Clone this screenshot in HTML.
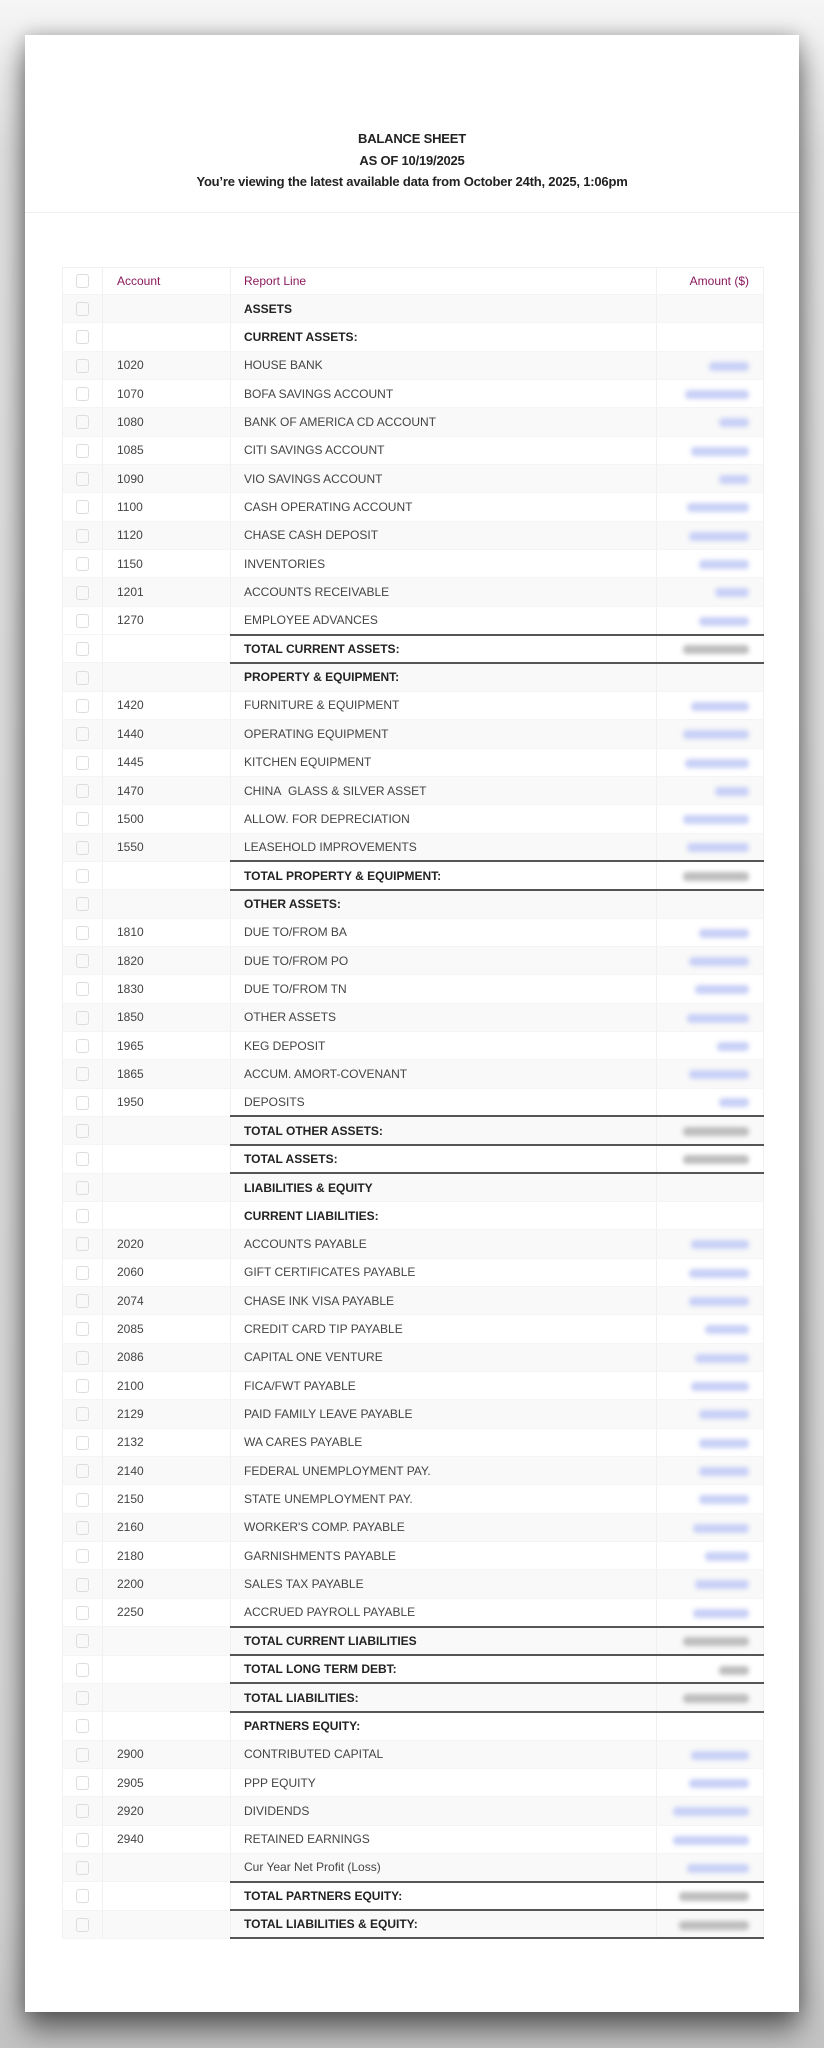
<!DOCTYPE html>
<html><head><meta charset="utf-8">
<style>
html,body{margin:0;padding:0}
body{width:824px;height:2048px;background:#ececec;position:relative;overflow:hidden;font-family:"Liberation Sans",sans-serif;}
.bg{position:absolute;left:0;top:0;width:824px;height:2048px;background:linear-gradient(#f6f6f6 0,#e0e0e0 150px,#d2d2d2 1900px,#c4c4c4 2048px)}
.card{position:absolute;left:25px;top:35px;width:774px;height:1977px;background:#fff;box-shadow:0 18px 28px rgba(0,0,0,.5),0 0 18px rgba(0,0,0,.25)}
.title{position:absolute;left:0;width:774px;text-align:center;font-weight:bold;color:#222;font-size:13px;letter-spacing:-0.2px}
.sep{position:absolute;left:0;top:177px;width:774px;height:1px;background:#f0f0f0}
table{position:absolute;left:37px;top:232px;width:701px;border-collapse:collapse;table-layout:fixed;font-size:12px;color:#444}
td,th{height:28.35px;padding:0;border-right:1px solid #f0f0f0;border-bottom:1px solid #f4f4f4;white-space:nowrap;box-sizing:border-box}
th{font-weight:normal;color:#8a1a5c;text-align:left;height:27px;border-top:1px solid #f0f0f0}
tr>*:first-child{border-left:1px solid #f0f0f0;text-align:center}
tr>*:last-child{text-align:right;padding-right:14px}
td:nth-child(2),th:nth-child(2){padding-left:14px}
td:nth-child(3),th:nth-child(3){padding-left:13px}
.cb{display:inline-block;width:11px;height:12px;border:1px solid #ddd;border-radius:3px;vertical-align:middle}
tr.g td{background:#f9f9f9}
tr.b td:nth-child(3){font-weight:bold;color:#222}
tr.t td:nth-child(3),tr.t td:nth-child(4){border-top:2px solid #555;border-bottom:2px solid #555;font-weight:bold;color:#222}
.a{display:inline-block;height:9px;background:#c8d0f6;filter:blur(2.5px);vertical-align:middle;border-radius:4px}
.tt{background:#bdbdbd}
</style></head><body>
<div class="bg"></div>
<div class="card">
<div class="title" style="top:96px">BALANCE SHEET</div>
<div class="title" style="top:118px">AS OF 10/19/2025</div>
<div class="title" style="top:139px">You’re viewing the latest available data from October 24th, 2025, 1:06pm</div>
<div class="sep"></div>
<table>
<colgroup><col style="width:40px"><col style="width:128px"><col style="width:426px"><col style="width:107px"></colgroup>
<tr><th><span class="cb"></span></th><th>Account</th><th>Report Line</th><th>Amount ($)</th></tr>
<tr class="g b"><td><span class="cb"></span></td><td></td><td>ASSETS</td><td></td></tr>
<tr class="b"><td><span class="cb"></span></td><td></td><td>CURRENT ASSETS:</td><td></td></tr>
<tr class="g"><td><span class="cb"></span></td><td>1020</td><td>HOUSE BANK</td><td><span class="a" style="width:40px"></span></td></tr>
<tr><td><span class="cb"></span></td><td>1070</td><td>BOFA SAVINGS ACCOUNT</td><td><span class="a" style="width:64px"></span></td></tr>
<tr class="g"><td><span class="cb"></span></td><td>1080</td><td>BANK OF AMERICA CD ACCOUNT</td><td><span class="a" style="width:30px"></span></td></tr>
<tr><td><span class="cb"></span></td><td>1085</td><td>CITI SAVINGS ACCOUNT</td><td><span class="a" style="width:58px"></span></td></tr>
<tr class="g"><td><span class="cb"></span></td><td>1090</td><td>VIO SAVINGS ACCOUNT</td><td><span class="a" style="width:30px"></span></td></tr>
<tr><td><span class="cb"></span></td><td>1100</td><td>CASH OPERATING ACCOUNT</td><td><span class="a" style="width:62px"></span></td></tr>
<tr class="g"><td><span class="cb"></span></td><td>1120</td><td>CHASE CASH DEPOSIT</td><td><span class="a" style="width:60px"></span></td></tr>
<tr><td><span class="cb"></span></td><td>1150</td><td>INVENTORIES</td><td><span class="a" style="width:50px"></span></td></tr>
<tr class="g"><td><span class="cb"></span></td><td>1201</td><td>ACCOUNTS RECEIVABLE</td><td><span class="a" style="width:34px"></span></td></tr>
<tr><td><span class="cb"></span></td><td>1270</td><td>EMPLOYEE ADVANCES</td><td><span class="a" style="width:50px"></span></td></tr>
<tr class="t"><td><span class="cb"></span></td><td></td><td>TOTAL CURRENT ASSETS:</td><td><span class="a tt" style="width:66px"></span></td></tr>
<tr class="g b"><td><span class="cb"></span></td><td></td><td>PROPERTY &amp; EQUIPMENT:</td><td></td></tr>
<tr><td><span class="cb"></span></td><td>1420</td><td>FURNITURE &amp; EQUIPMENT</td><td><span class="a" style="width:58px"></span></td></tr>
<tr class="g"><td><span class="cb"></span></td><td>1440</td><td>OPERATING EQUIPMENT</td><td><span class="a" style="width:66px"></span></td></tr>
<tr><td><span class="cb"></span></td><td>1445</td><td>KITCHEN EQUIPMENT</td><td><span class="a" style="width:64px"></span></td></tr>
<tr class="g"><td><span class="cb"></span></td><td>1470</td><td>CHINA&nbsp; GLASS &amp; SILVER ASSET</td><td><span class="a" style="width:34px"></span></td></tr>
<tr><td><span class="cb"></span></td><td>1500</td><td>ALLOW. FOR DEPRECIATION</td><td><span class="a" style="width:66px"></span></td></tr>
<tr class="g"><td><span class="cb"></span></td><td>1550</td><td>LEASEHOLD IMPROVEMENTS</td><td><span class="a" style="width:62px"></span></td></tr>
<tr class="t"><td><span class="cb"></span></td><td></td><td>TOTAL PROPERTY &amp; EQUIPMENT:</td><td><span class="a tt" style="width:66px"></span></td></tr>
<tr class="g b"><td><span class="cb"></span></td><td></td><td>OTHER ASSETS:</td><td></td></tr>
<tr><td><span class="cb"></span></td><td>1810</td><td>DUE TO/FROM BA</td><td><span class="a" style="width:50px"></span></td></tr>
<tr class="g"><td><span class="cb"></span></td><td>1820</td><td>DUE TO/FROM PO</td><td><span class="a" style="width:60px"></span></td></tr>
<tr><td><span class="cb"></span></td><td>1830</td><td>DUE TO/FROM TN</td><td><span class="a" style="width:54px"></span></td></tr>
<tr class="g"><td><span class="cb"></span></td><td>1850</td><td>OTHER ASSETS</td><td><span class="a" style="width:62px"></span></td></tr>
<tr><td><span class="cb"></span></td><td>1965</td><td>KEG DEPOSIT</td><td><span class="a" style="width:32px"></span></td></tr>
<tr class="g"><td><span class="cb"></span></td><td>1865</td><td>ACCUM. AMORT-COVENANT</td><td><span class="a" style="width:60px"></span></td></tr>
<tr><td><span class="cb"></span></td><td>1950</td><td>DEPOSITS</td><td><span class="a" style="width:30px"></span></td></tr>
<tr class="g t"><td><span class="cb"></span></td><td></td><td>TOTAL OTHER ASSETS:</td><td><span class="a tt" style="width:66px"></span></td></tr>
<tr class="t"><td><span class="cb"></span></td><td></td><td>TOTAL ASSETS:</td><td><span class="a tt" style="width:66px"></span></td></tr>
<tr class="g b"><td><span class="cb"></span></td><td></td><td>LIABILITIES &amp; EQUITY</td><td></td></tr>
<tr class="b"><td><span class="cb"></span></td><td></td><td>CURRENT LIABILITIES:</td><td></td></tr>
<tr class="g"><td><span class="cb"></span></td><td>2020</td><td>ACCOUNTS PAYABLE</td><td><span class="a" style="width:58px"></span></td></tr>
<tr><td><span class="cb"></span></td><td>2060</td><td>GIFT CERTIFICATES PAYABLE</td><td><span class="a" style="width:60px"></span></td></tr>
<tr class="g"><td><span class="cb"></span></td><td>2074</td><td>CHASE INK VISA PAYABLE</td><td><span class="a" style="width:60px"></span></td></tr>
<tr><td><span class="cb"></span></td><td>2085</td><td>CREDIT CARD TIP PAYABLE</td><td><span class="a" style="width:44px"></span></td></tr>
<tr class="g"><td><span class="cb"></span></td><td>2086</td><td>CAPITAL ONE VENTURE</td><td><span class="a" style="width:54px"></span></td></tr>
<tr><td><span class="cb"></span></td><td>2100</td><td>FICA/FWT PAYABLE</td><td><span class="a" style="width:58px"></span></td></tr>
<tr class="g"><td><span class="cb"></span></td><td>2129</td><td>PAID FAMILY LEAVE PAYABLE</td><td><span class="a" style="width:50px"></span></td></tr>
<tr><td><span class="cb"></span></td><td>2132</td><td>WA CARES PAYABLE</td><td><span class="a" style="width:50px"></span></td></tr>
<tr class="g"><td><span class="cb"></span></td><td>2140</td><td>FEDERAL UNEMPLOYMENT PAY.</td><td><span class="a" style="width:50px"></span></td></tr>
<tr><td><span class="cb"></span></td><td>2150</td><td>STATE UNEMPLOYMENT PAY.</td><td><span class="a" style="width:50px"></span></td></tr>
<tr class="g"><td><span class="cb"></span></td><td>2160</td><td>WORKER'S COMP. PAYABLE</td><td><span class="a" style="width:56px"></span></td></tr>
<tr><td><span class="cb"></span></td><td>2180</td><td>GARNISHMENTS PAYABLE</td><td><span class="a" style="width:44px"></span></td></tr>
<tr class="g"><td><span class="cb"></span></td><td>2200</td><td>SALES TAX PAYABLE</td><td><span class="a" style="width:54px"></span></td></tr>
<tr><td><span class="cb"></span></td><td>2250</td><td>ACCRUED PAYROLL PAYABLE</td><td><span class="a" style="width:56px"></span></td></tr>
<tr class="g t"><td><span class="cb"></span></td><td></td><td>TOTAL CURRENT LIABILITIES</td><td><span class="a tt" style="width:66px"></span></td></tr>
<tr class="t"><td><span class="cb"></span></td><td></td><td>TOTAL LONG TERM DEBT:</td><td><span class="a tt" style="width:30px"></span></td></tr>
<tr class="g t"><td><span class="cb"></span></td><td></td><td>TOTAL LIABILITIES:</td><td><span class="a tt" style="width:66px"></span></td></tr>
<tr class="b"><td><span class="cb"></span></td><td></td><td>PARTNERS EQUITY:</td><td></td></tr>
<tr class="g"><td><span class="cb"></span></td><td>2900</td><td>CONTRIBUTED CAPITAL</td><td><span class="a" style="width:58px"></span></td></tr>
<tr><td><span class="cb"></span></td><td>2905</td><td>PPP EQUITY</td><td><span class="a" style="width:60px"></span></td></tr>
<tr class="g"><td><span class="cb"></span></td><td>2920</td><td>DIVIDENDS</td><td><span class="a" style="width:76px"></span></td></tr>
<tr><td><span class="cb"></span></td><td>2940</td><td>RETAINED EARNINGS</td><td><span class="a" style="width:76px"></span></td></tr>
<tr class="g"><td><span class="cb"></span></td><td></td><td>Cur Year Net Profit (Loss)</td><td><span class="a" style="width:62px"></span></td></tr>
<tr class="t"><td><span class="cb"></span></td><td></td><td>TOTAL PARTNERS EQUITY:</td><td><span class="a tt" style="width:70px"></span></td></tr>
<tr class="g t"><td><span class="cb"></span></td><td></td><td>TOTAL LIABILITIES &amp; EQUITY:</td><td><span class="a tt" style="width:70px"></span></td></tr>
</table>
</div>
</body></html>
